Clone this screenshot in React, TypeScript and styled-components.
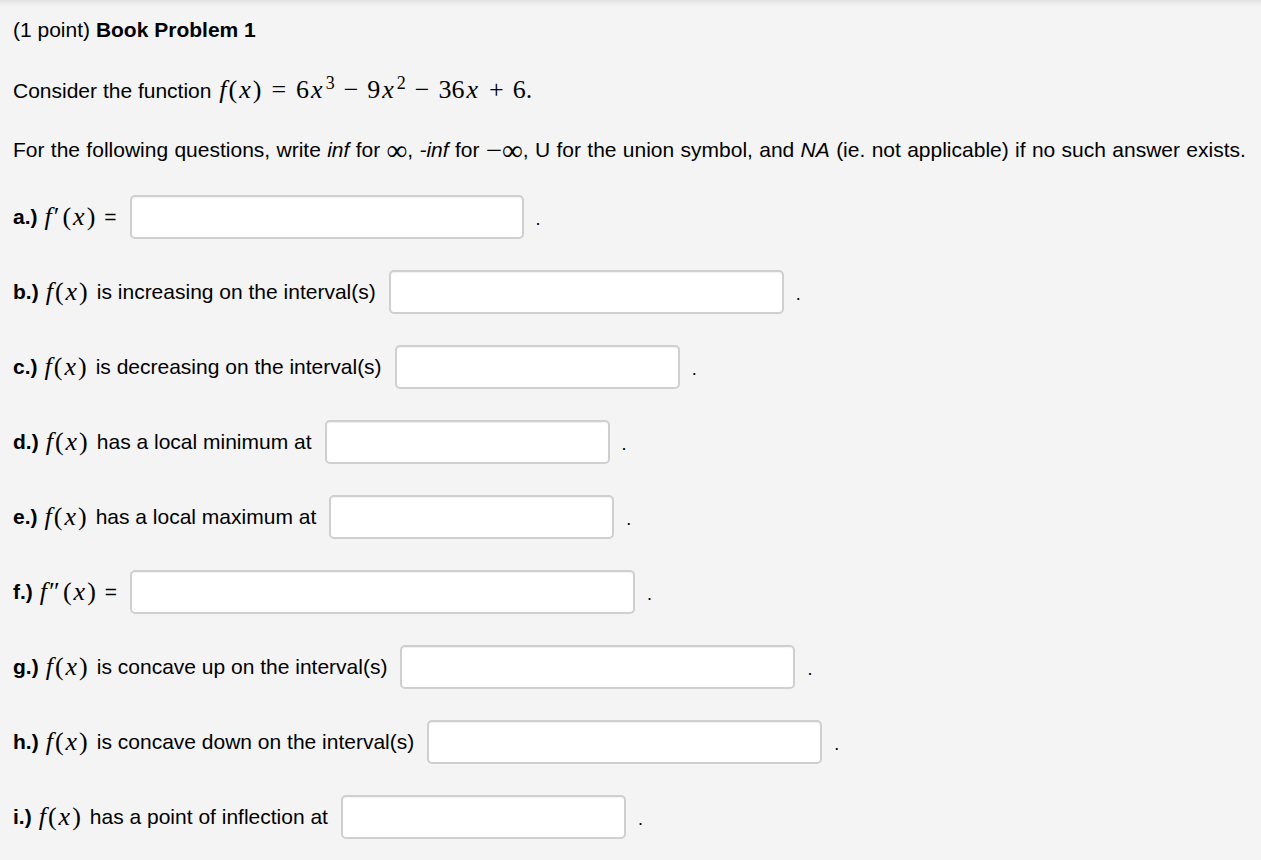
import React from "react";
import styled, { createGlobalStyle } from "styled-components";

const Global = createGlobalStyle`
  html, body { margin: 0; padding: 0; background: #f4f4f4; }
  body { font-family: "Liberation Sans", Arial, sans-serif; color: #000; }
`;

const Page = styled.div`
  min-height: 860px;
  box-sizing: border-box;
  padding: 16px 13px 0;
  background: linear-gradient(#e2e2e2 0px, #ebebeb 3px, #f4f4f4 7px, #f4f4f4 100%);
  font-size: 21px;
`;

const Title = styled.div`
  line-height: 28px;
  height: 28px;
`;

const Para = styled.div<{ $mt: number; $ws?: number }>`
  margin-top: ${(p) => p.$mt}px;
  line-height: 34px;
  height: 34px;
  display: flex;
  align-items: center;
  white-space: nowrap;
  word-spacing: ${(p) => p.$ws ?? 0}px;
`;

const MathSpan = styled.span`
  font-family: "Liberation Serif", "Times New Roman", serif;
  font-size: 26px;
  white-space: nowrap;
  word-spacing: 0;
`;

const MI = styled.span`
  font-style: italic;
  padding: 0 2px;
`;

const MO = styled.span<{ $sp?: number; $r?: number }>`
  padding: 0 ${(p) => p.$r ?? p.$sp ?? 0}px 0 ${(p) => p.$sp ?? 0}px;
`;

const Sup = styled.sup`
  font-size: 18px;
  vertical-align: 0;
  position: relative;
  top: -9px;
  margin-left: 1px;
`;

const Rows = styled.div`
  margin-top: 28px;
  display: flex;
  flex-direction: column;
  gap: 31px;
`;

const Row = styled.div`
  display: flex;
  align-items: center;
  height: 44px;
  white-space: nowrap;
`;

const Label = styled.span`
  font-weight: bold;
  margin-right: 5px;
`;

const Text = styled.span<{ $ml?: number }>`
  margin-left: ${(p) => p.$ml ?? 8}px;
`;

const Box = styled.input<{ $w: number }>`
  box-sizing: border-box;
  width: ${(p) => p.$w}px;
  height: 44px;
  margin-left: 13px;
  border: 2px solid #cfcfcf;
  border-radius: 5px;
  background: #fff;
  box-shadow: inset 0 1px 1px rgba(0,0,0,0.06);
  outline: none;
`;

const Dot = styled.span`
  margin-left: 12px;
  font-size: 18px;
  position: relative;
  top: 2px;
`;

const F = () => (
  <MathSpan>
    <MI>f</MI>
    <MO>(</MO>
    <MI>x</MI>
    <MO $r={1}>)</MO>
  </MathSpan>
);

type RowDef = { k: string; math: React.ReactNode; text?: string; w: number };

const rows: RowDef[] = [
  { k: "a.)", math: (<MathSpan><MI>f</MI><MO $r={3}>′</MO><MO>(</MO><MI>x</MI><MO $r={3}>)</MO></MathSpan>), text: "=", w: 394 },
  { k: "b.)", math: <F />, text: "is increasing on the interval(s)", w: 395 },
  { k: "c.)", math: <F />, text: "is decreasing on the interval(s)", w: 285 },
  { k: "d.)", math: <F />, text: "has a local minimum at", w: 285 },
  { k: "e.)", math: <F />, text: "has a local maximum at", w: 285 },
  { k: "f.)", math: (<MathSpan><MI>f</MI><MO $r={3}>″</MO><MO>(</MO><MI>x</MI><MO $r={3}>)</MO></MathSpan>), text: "=", w: 505 },
  { k: "g.)", math: <F />, text: "is concave up on the interval(s)", w: 395 },
  { k: "h.)", math: <F />, text: "is concave down on the interval(s)", w: 395 },
  { k: "i.)", math: <F />, text: "has a point of inflection at", w: 285 },
];

const Serif = styled.span`
  font-family: "Liberation Serif", "Times New Roman", serif;
  font-size: 29px;
  line-height: 1;
`;

export default function App() {
  return (
    <>
      <Global />
      <Page>
        <Title>
          (1 point) <b>Book Problem 1</b>
        </Title>
        <Para $mt={30}>
          Consider the function&nbsp;
          <MathSpan>
            <MI>f</MI><MO>(</MO><MI>x</MI><MO>)</MO>
            <MO $sp={10}>=</MO>
            6<MI>x</MI><Sup>3</Sup>
            <MO $sp={9}>−</MO>
            9<MI>x</MI><Sup>2</Sup>
            <MO $sp={9}>−</MO>
            36<MI>x</MI>
            <MO $sp={9}>+</MO>
            6.
          </MathSpan>
        </Para>
        <Para $mt={25} $ws={0.5}>
          For the following questions, write&nbsp;<i>inf</i>&nbsp;for&nbsp;<Serif>∞</Serif>, <i>&nbsp;-inf</i>&nbsp;for&nbsp;<Serif>−∞</Serif>, U for the union symbol, and&nbsp;<i>NA</i>&nbsp;(ie. not applicable) if no such answer exists.
        </Para>
        <Rows>
          {rows.map((r) => (
            <Row key={r.k}>
              <Label>{r.k}</Label>
              {r.math}
              {r.text && <Text $ml={r.text === "=" ? 6 : 8}>{r.text}</Text>}
              <Box $w={r.w} type="text" aria-label={r.k} />
              <Dot>.</Dot>
            </Row>
          ))}
        </Rows>
      </Page>
    </>
  );
}
